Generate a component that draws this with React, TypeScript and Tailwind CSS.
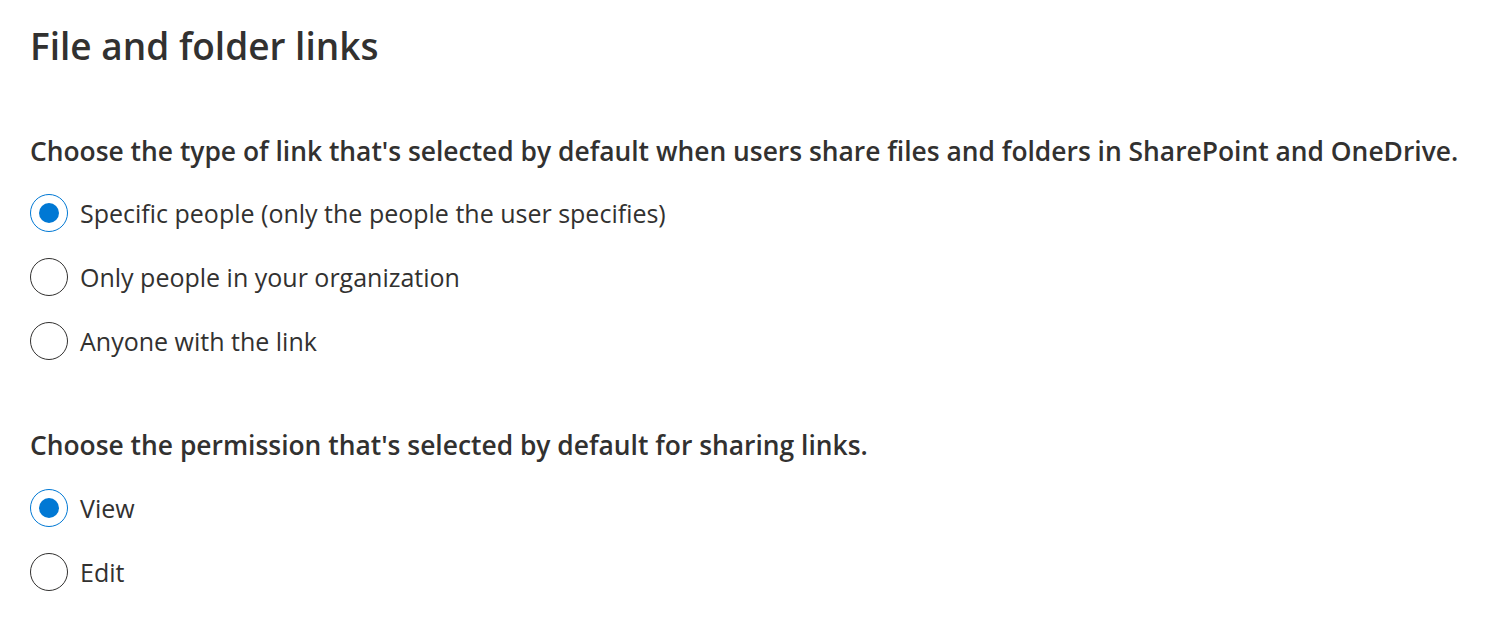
import { useState } from "react";

type Option = { id: string; label: string };

const LINK_TYPES: Option[] = [
  { id: "specific", label: "Specific people (only the people the user specifies)" },
  { id: "org", label: "Only people in your organization" },
  { id: "anyone", label: "Anyone with the link" },
];

const PERMISSIONS: Option[] = [
  { id: "view", label: "View" },
  { id: "edit", label: "Edit" },
];

const Radio = ({
  option,
  checked,
  onSelect,
}: {
  option: Option;
  checked: boolean;
  onSelect: () => void;
}) => (
  <button
    type="button"
    onClick={onSelect}
    className="flex h-[64px] items-center gap-[12px] text-left"
  >
    <span
      className={
        checked
          ? "flex h-[38px] w-[38px] items-center justify-center rounded-full border border-[#0078d4]"
          : "flex h-[38px] w-[38px] items-center justify-center rounded-full border border-[#323130]"
      }
    >
      {checked && <span className="h-[20px] w-[20px] rounded-full bg-[#0078d4]" />}
    </span>
    <span className="text-[25px] leading-none text-[#323130]">{option.label}</span>
  </button>
);

const RadioGroup = ({
  options,
  value,
  onChange,
}: {
  options: Option[];
  value: string;
  onChange: (id: string) => void;
}) => (
  <div className="flex flex-col items-start">
    {options.map((o) => (
      <Radio key={o.id} option={o} checked={value === o.id} onSelect={() => onChange(o.id)} />
    ))}
  </div>
);

export default function App() {
  const [linkType, setLinkType] = useState("specific");
  const [permission, setPermission] = useState("view");

  return (
    <div className="min-h-screen bg-white pl-[30px] pt-[22px] font-['Open_Sans',sans-serif] text-[#323130]">
      <h1 className="text-[37px] font-semibold leading-[48px]">File and folder links</h1>

      <h2 className="mt-[63px] text-[26.4px] font-semibold leading-[36px]">
        Choose the type of link that's selected by default when users share files and folders in
        SharePoint and OneDrive.
      </h2>
      <div className="mt-[12px]">
        <RadioGroup options={LINK_TYPES} value={linkType} onChange={setLinkType} />
      </div>

      <h2 className="mt-[54px] text-[26.4px] font-semibold leading-[36px]">
        Choose the permission that's selected by default for sharing links.
      </h2>
      <div className="mt-[13px]">
        <RadioGroup options={PERMISSIONS} value={permission} onChange={setPermission} />
      </div>
    </div>
  );
}
